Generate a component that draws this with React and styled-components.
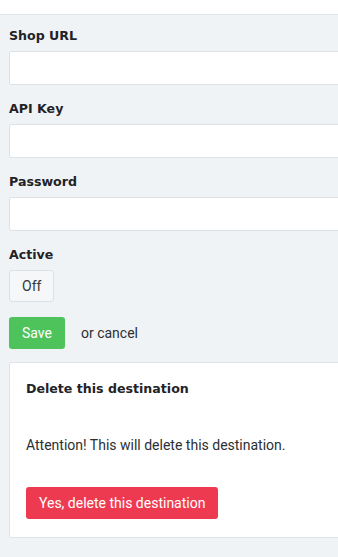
import React, { useState } from 'react';
import styled, { createGlobalStyle } from 'styled-components';

const GlobalStyle = createGlobalStyle`
  html, body {
    margin: 0;
    padding: 0;
    background: #f0f3f6;
    overflow: hidden;
  }
  body {
    font-family: Roboto, "Liberation Sans", sans-serif;
    color: #2b2f33;
  }
`;

const fields = [
  { name: 'shopUrl', label: 'Shop URL', type: 'text' },
  { name: 'apiKey', label: 'API Key', type: 'text' },
  { name: 'password', label: 'Password', type: 'password' },
];

function App() {
  const [active, setActive] = useState(false);

  return (
    <>
      <GlobalStyle />
      <TopBar />
      <Page>
        {fields.map(f => (
          <Field key={f.name}>
            <Label htmlFor={f.name}>{f.label}</Label>
            <Input id={f.name} type={f.type} />
          </Field>
        ))}
        <Field>
          <Label>Active</Label>
          <Toggle type="button" onClick={() => setActive(!active)}>
            {active ? 'On' : 'Off'}
          </Toggle>
        </Field>
        <Actions>
          <Button type="button" variant="success">
            Save
          </Button>
          <Cancel>or cancel</Cancel>
        </Actions>
        <Card>
          <CardTitle>Delete this destination</CardTitle>
          <CardText>Attention! This will delete this destination.</CardText>
          <Button type="button" variant="danger">
            Yes, delete this destination
          </Button>
        </Card>
      </Page>
    </>
  );
}

const TopBar = styled.div`
  height: 14px;
  background: #fff;
  border-bottom: 1px solid #dfe3e7;
`;

// wider than the window on purpose: the inputs and card run off the right edge
const Page = styled.div`
  width: 420px;
  padding: 12px 9px 20px;
`;

const Field = styled.div`
  display: flex;
  flex-direction: column;
  align-items: flex-start;
  gap: 6px;
  margin-bottom: 15px;
`;

const Label = styled.label`
  font-family: "DejaVu Sans", Verdana, sans-serif;
  font-weight: 700;
  font-size: 12.6px;
  line-height: 18px;
  color: #1f2327;
`;

const Input = styled.input`
  box-sizing: border-box;
  width: 100%;
  height: 34px;
  background: #fff;
  border: 1px solid #dde2e6;
  border-radius: 2px;
  padding: 0 10px;
  font: inherit;
  outline: none;
`;

const Toggle = styled.button`
  box-sizing: border-box;
  height: 32px;
  padding: 0 12px;
  background: #f5f7f9;
  border: 1px solid #dce1e5;
  border-radius: 3px;
  font-family: Roboto, sans-serif;
  font-size: 14px;
  color: #33373b;
  cursor: pointer;
`;

const Actions = styled.div`
  display: flex;
  align-items: center;
  gap: 16px;
  margin-top: 1px;
  margin-bottom: 13px;
`;

const colors = {
  success: '#4ec25b',
  danger: '#ee3a51',
};

const Button = styled.button`
  box-sizing: border-box;
  height: 32px;
  padding: 0 13px;
  border: none;
  border-radius: 3px;
  background: ${p => colors[p.variant]};
  color: #fff;
  font-family: Roboto, sans-serif;
  font-size: 14px;
  cursor: pointer;
`;

const Cancel = styled.span`
  font-size: 14px;
  color: #2b2f33;
`;

const Card = styled.div`
  background: #fff;
  border: 1px solid #dfe3e7;
  border-radius: 2px;
  padding: 17px 16px 18px;
`;

const CardTitle = styled.h3`
  margin: 0 0 37px;
  font-family: "DejaVu Sans", Verdana, sans-serif;
  font-weight: 700;
  font-size: 12.6px;
  line-height: 18px;
  color: #1f2327;
`;

const CardText = styled.p`
  margin: 0 0 32px;
  font-size: 14px;
  line-height: 20px;
  color: #2b2f33;
`;

export default App;
